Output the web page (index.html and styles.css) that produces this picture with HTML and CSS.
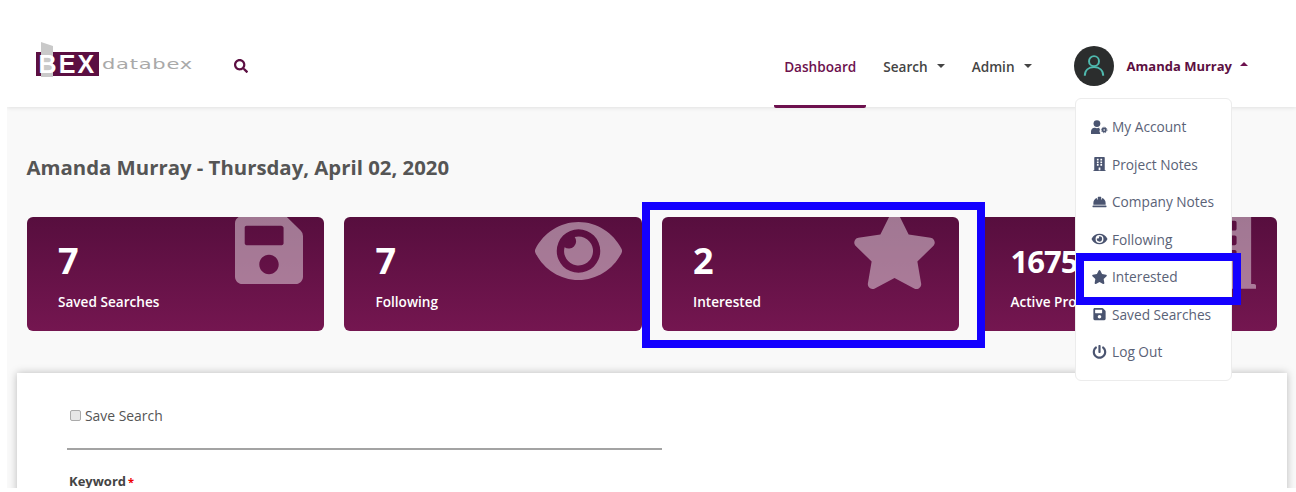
FILE: index.html
```html
<!DOCTYPE html>
<html lang="en">
<head>
    <meta charset="UTF-8">
    <title>Databex Dashboard</title>
    <link rel="stylesheet" href="styles.css">
</head>
<body>
    <div class="page">
        <header class="topbar">
            <div class="logo">
                <svg class="logo-tab" viewBox="0 0 12 35"><path d="M0 0L12 4V35H0z"/></svg>
                <div class="logo-bex"><span>BEX</span></div>
                <span class="logo-name">databex</span>
            </div>
            <svg class="top-search" viewBox="0 0 512 512"><path d="M505 442.7L405.3 343c-4.5-4.5-10.6-7-17-7H372c27.6-35.3 44-79.7 44-128C416 93.1 322.9 0 208 0S0 93.1 0 208s93.1 208 208 208c48.3 0 92.7-16.4 128-44v16.3c0 6.4 2.5 12.5 7 17l99.7 99.7c9.4 9.4 24.6 9.4 33.9 0l28.3-28.3c9.4-9.4 9.4-24.6.1-34zM208 336c-70.7 0-128-57.2-128-128 0-70.7 57.2-128 128-128 70.7 0 128 57.2 128 128 0 70.7-57.2 128-128 128z"/></svg>
            <nav class="nav">
                <a class="nav-item active">Dashboard</a>
                <a class="nav-item">Search <span class="caret"></span></a>
                <a class="nav-item">Admin <span class="caret"></span></a>
            </nav>
            <div class="user">
                <div class="avatar">
                    <svg viewBox="0 0 24 24"><circle cx="12" cy="7.5" r="4.6"/><path d="M3.5 21c0-5 3.5-8 8.500-8s8.500 3 8.500 8"/></svg>
                </div>
                <span class="user-name">Amanda Murray</span>
                <span class="caret up"></span>
            </div>
        </header>

        <main class="content">
            <h2 class="greeting">Amanda Murray - Thursday, April 02, 2020</h2>

            <div class="cards">
                <div class="card">
                    <div class="card-num">7</div>
                    <div class="card-label">Saved Searches</div>
                    <svg class="card-icon icon-save" viewBox="0 0 448 512"><path d="M433.941 129.941l-83.882-83.882A48 48 0 0 0 316.118 32H48C21.49 32 0 53.49 0 80v352c0 26.51 21.49 48 48 48h352c26.51 0 48-21.49 48-48V163.882a48 48 0 0 0-14.059-33.941zM224 416c-35.346 0-64-28.654-64-64 0-35.346 28.654-64 64-64s64 28.654 64 64c0 35.346-28.654 64-64 64zm96-304.52V212c0 6.627-5.373 12-12 12H76c-6.627 0-12-5.373-12-12V108c0-6.627 5.373-12 12-12h228.52c3.183 0 6.235 1.264 8.485 3.515l3.48 3.48A11.996 11.996 0 0 1 320 111.48z"/></svg>
                </div>
                <div class="card">
                    <div class="card-num">7</div>
                    <div class="card-label">Following</div>
                    <svg class="card-icon icon-eye" viewBox="0 0 576 512"><path d="M572.52 241.4C518.29 135.59 410.93 64 288 64S57.68 135.64 3.48 241.41a32.35 32.35 0 0 0 0 29.19C57.71 376.41 165.07 448 288 448s230.32-71.64 284.52-177.41a32.35 32.35 0 0 0 0-29.19zM288 400a144 144 0 1 1 144-144 143.93 143.93 0 0 1-144 144zm0-240a95.31 95.31 0 0 0-25.31 3.79 47.85 47.85 0 0 1-66.9 66.9A95.78 95.78 0 1 0 288 160z"/></svg>
                </div>
                <div class="card">
                    <div class="card-num">2</div>
                    <div class="card-label">Interested</div>
                    <svg class="card-icon icon-star" viewBox="0 0 576 512"><path d="M259.3 17.8L194 150.2 47.9 171.5c-26.2 3.8-36.7 36.1-17.7 54.6l105.7 103-25 145.5c-4.5 26.3 23.2 46 46.4 33.7L288 439.6l130.7 68.7c23.2 12.2 50.9-7.4 46.4-33.7l-25-145.5 105.7-103c19-18.5 8.5-50.8-17.7-54.6L382 150.2 316.7 17.8c-11.7-23.6-45.6-23.9-57.4 0z"/></svg>
                </div>
                <div class="card">
                    <div class="card-num long">1675</div>
                    <div class="card-label">Active Projects</div>
                    <svg class="card-icon icon-building" viewBox="0 0 448 512"><path d="M436 480h-20V24c0-13.255-10.745-24-24-24H56C42.745 0 32 10.745 32 24v456H12c-6.627 0-12 5.373-12 12v20h448v-20c0-6.627-5.373-12-12-12zM128 76c0-6.627 5.373-12 12-12h40c6.627 0 12 5.373 12 12v40c0 6.627-5.373 12-12 12h-40c-6.627 0-12-5.373-12-12V76zm0 96c0-6.627 5.373-12 12-12h40c6.627 0 12 5.373 12 12v40c0 6.627-5.373 12-12 12h-40c-6.627 0-12-5.373-12-12v-40zm52 148h-40c-6.627 0-12-5.373-12-12v-40c0-6.627 5.373-12 12-12h40c6.627 0 12 5.373 12 12v40c0 6.627-5.373 12-12 12zm76 160h-64v-84c0-6.627 5.373-12 12-12h40c6.627 0 12 5.373 12 12v84zm64-172c0 6.627-5.373 12-12 12h-40c-6.627 0-12-5.373-12-12v-40c0-6.627 5.373-12 12-12h40c6.627 0 12 5.373 12 12v40zm0-96c0 6.627-5.373 12-12 12h-40c-6.627 0-12-5.373-12-12v-40c0-6.627 5.373-12 12-12h40c6.627 0 12 5.373 12 12v40zm0-96c0 6.627-5.373 12-12 12h-40c-6.627 0-12-5.373-12-12V76c0-6.627 5.373-12 12-12h40c6.627 0 12 5.373 12 12v40z"/></svg>
                </div>
            </div>

            <section class="panel">
                <label class="save-search"><input type="checkbox"> Save Search</label>
                <hr class="panel-line">
                <label class="field-label">Keyword<span class="req">*</span></label>
            </section>
        </main>

        <ul class="menu">
            <li><svg viewBox="0 0 640 512"><circle cx="224" cy="128" r="128"/><path d="M0 464v-42c0-74 60-134 134-134h17c22 10 47 16 73 16s51-6 73-16h20c-4 26 4 52 24 72-22 24-30 60-12 92 4 8 10 14 16 20v80H48c-26 0-48-22-48-48z"/><circle class="gear" cx="496" cy="368" r="62"/><circle class="gear-teeth" cx="496" cy="368" r="105"/></svg>My Account</li>
            <li><svg viewBox="0 0 448 512"><path d="M436 480h-20V24c0-13.255-10.745-24-24-24H56C42.745 0 32 10.745 32 24v456H12c-6.627 0-12 5.373-12 12v20h448v-20c0-6.627-5.373-12-12-12zM128 76c0-6.627 5.373-12 12-12h40c6.627 0 12 5.373 12 12v40c0 6.627-5.373 12-12 12h-40c-6.627 0-12-5.373-12-12V76zm0 96c0-6.627 5.373-12 12-12h40c6.627 0 12 5.373 12 12v40c0 6.627-5.373 12-12 12h-40c-6.627 0-12-5.373-12-12v-40zm52 148h-40c-6.627 0-12-5.373-12-12v-40c0-6.627 5.373-12 12-12h40c6.627 0 12 5.373 12 12v40c0 6.627-5.373 12-12 12zm76 160h-64v-84c0-6.627 5.373-12 12-12h40c6.627 0 12 5.373 12 12v84zm64-172c0 6.627-5.373 12-12 12h-40c-6.627 0-12-5.373-12-12v-40c0-6.627 5.373-12 12-12h40c6.627 0 12 5.373 12 12v40zm0-96c0 6.627-5.373 12-12 12h-40c-6.627 0-12-5.373-12-12v-40c0-6.627 5.373-12 12-12h40c6.627 0 12 5.373 12 12v40zm0-96c0 6.627-5.373 12-12 12h-40c-6.627 0-12-5.373-12-12V76c0-6.627 5.373-12 12-12h40c6.627 0 12 5.373 12 12v40z"/></svg>Project Notes</li>
            <li><svg viewBox="0 0 512 512"><path d="M480 288c0-80.25-49.28-148.92-119.19-177.62L320 192V80a16 16 0 0 0-16-16h-96a16 16 0 0 0-16 16v112l-40.81-81.62C81.28 139.08 32 207.75 32 288v64h448zm16 96H16a16 16 0 0 0-16 16v32a16 16 0 0 0 16 16h480a16 16 0 0 0 16-16v-32a16 16 0 0 0-16-16z"/></svg>Company Notes</li>
            <li><svg viewBox="0 0 576 512"><path d="M572.52 241.4C518.29 135.59 410.93 64 288 64S57.68 135.64 3.48 241.41a32.35 32.35 0 0 0 0 29.19C57.71 376.41 165.07 448 288 448s230.32-71.64 284.52-177.41a32.35 32.35 0 0 0 0-29.19zM288 400a144 144 0 1 1 144-144 143.93 143.93 0 0 1-144 144zm0-240a95.31 95.31 0 0 0-25.31 3.79 47.85 47.85 0 0 1-66.9 66.9A95.78 95.78 0 1 0 288 160z"/></svg>Following</li>
            <li><svg viewBox="0 0 576 512"><path d="M259.3 17.8L194 150.2 47.9 171.5c-26.2 3.8-36.7 36.1-17.7 54.6l105.7 103-25 145.5c-4.5 26.3 23.2 46 46.4 33.7L288 439.6l130.7 68.7c23.2 12.2 50.9-7.4 46.4-33.7l-25-145.5 105.7-103c19-18.5 8.5-50.8-17.7-54.6L382 150.2 316.7 17.8c-11.7-23.6-45.6-23.9-57.4 0z"/></svg>Interested</li>
            <li><svg viewBox="0 0 448 512"><path d="M433.941 129.941l-83.882-83.882A48 48 0 0 0 316.118 32H48C21.49 32 0 53.49 0 80v352c0 26.51 21.49 48 48 48h352c26.51 0 48-21.49 48-48V163.882a48 48 0 0 0-14.059-33.941zM224 416c-35.346 0-64-28.654-64-64 0-35.346 28.654-64 64-64s64 28.654 64 64c0 35.346-28.654 64-64 64zm96-304.52V212c0 6.627-5.373 12-12 12H76c-6.627 0-12-5.373-12-12V108c0-6.627 5.373-12 12-12h228.52c3.183 0 6.235 1.264 8.485 3.515l3.48 3.48A11.996 11.996 0 0 1 320 111.48z"/></svg>Saved Searches</li>
            <li><svg viewBox="0 0 512 512"><path d="M400 54.1c63 45 104 118.6 104 201.9 0 136.8-110.8 247.7-247.5 248C120 504.3 8.2 393 8 256.4 7.9 173.1 48.9 99.3 111.8 54.2c11.7-8.3 28-4.8 35 7.7L162.6 90c5.9 10.5 3.1 23.8-6.6 31-41.5 30.8-68 79.6-68 134.9-.1 92.3 74.5 168.1 168 168.1 91.6 0 168.6-74.2 168-169.1-.3-51.8-24.7-101.8-68.1-134-9.7-7.2-12.4-20.5-6.5-30.9l15.8-28.1c7-12.4 23.2-16.1 34.8-7.8zM296 264V24c0-13.3-10.7-24-24-24h-32c-13.3 0-24 10.7-24 24v240c0 13.3 10.7 24 24 24h32c13.3 0 24-10.7 24-24z"/></svg>Log Out</li>
        </ul>

        <div class="mark mark-card"></div>
        <div class="mark mark-item"></div>
    </div>
</body>
</html>
```

FILE: styles.css
```css
* {
    box-sizing: border-box;
}

html, body {
    margin: 0;
    height: 492px;
    overflow: hidden;
    background: white;
}

body {
    font-family: 'Open Sans', 'Noto Sans', sans-serif;
    color: #555;
}

.page {
    position: relative;
    height: 488px;
    margin-left: 7px;
    background-color: #f9f9f9;
    overflow: hidden;
}

/* top bar */
.topbar {
    display: flex;
    align-items: center;
    height: 107px;
    padding: 24px 48px 0 29px;
    background: white;
    box-shadow: 0 1px 4px rgba(0,0,0,0.1);
    position: relative;
}

.logo {
    position: relative;
    display: flex;
    align-items: center;
    width: 155px;
    height: 24px;
    margin-top: -3px;
}

.logo-tab {
    position: absolute;
    z-index: 1;
    left: 5px;
    top: -10px;
    width: 12px;
    height: 35px;
    fill: #c9c9c9;
}

.logo-bex {
    width: 63px;
    height: 24px;
    background: #5c0f42;
    text-align: center;
}

.logo-bex span {
    position: relative;
    z-index: 2;
    color: white;
    font-family: 'Liberation Sans', sans-serif;
    font-weight: bold;
    font-size: 25px;
    line-height: 24px;
    letter-spacing: 2.2px;
}

.logo-name {
    margin-left: 3px;
    font-family: 'DejaVu Sans', sans-serif;
    font-size: 14px;
    letter-spacing: 0.5px;
    color: #a9a9a9;
    transform: scaleX(1.5);
    transform-origin: left center;
}

.top-search {
    width: 14px;
    height: 14px;
    margin-left: 43px;
    fill: #5c0f42;
}

.nav {
    display: flex;
    align-self: flex-start;
    height: 108px;
    margin-top: -24px;
    margin-left: auto;
}

.nav-item {
    display: flex;
    align-items: center;
    gap: 9px;
    height: 108px;
    padding: 27px 10px 0;
    margin-left: 7px;
    font-size: 13.6px;
    font-weight: 600;
    color: #444;
    border-bottom: 3px solid transparent;
}

.nav-item.active {
    color: #6d114e;
    border-bottom-color: #6d114e;
    border-radius: 2px;
}

.caret {
    display: inline-block;
    width: 0;
    height: 0;
    border-left: 4.5px solid transparent;
    border-right: 4.5px solid transparent;
    border-top: 4.5px solid #444;
}

.caret.up {
    border-top: 0;
    border-bottom: 4.5px solid #6d114e;
    margin-left: 8px;
    margin-top: -3px;
}

.user {
    display: flex;
    align-items: center;
    margin-left: 32px;
}

.avatar {
    display: flex;
    align-items: center;
    justify-content: center;
    width: 40px;
    height: 40px;
    margin-right: 13px;
    border-radius: 50%;
    background: #2b2d2d;
}

.avatar svg {
    width: 26px;
    height: 26px;
    fill: none;
    stroke: #4fb9ae;
    stroke-width: 1.8;
}

.user-name {
    font-size: 13px;
    font-weight: 700;
    color: #5c0f42;
}

/* main */
.content {
    padding: 0 19.5px;
}

.greeting {
    margin: 46px 0 36px;
    font-size: 20.35px;
    line-height: 28px;
    font-weight: 700;
    color: #555;
}

.cards {
    display: grid;
    grid-template-columns: repeat(4, 1fr);
    gap: 20px;
}

.card {
    position: relative;
    height: 114px;
    padding: 22px 31.5px;
    border-radius: 6px;
    background: linear-gradient(#570e3e, #741650);
    color: white;
    overflow: hidden;
}

.card-num {
    font-size: 36px;
    line-height: 44px;
    font-weight: 700;
}

.card-num.long {
    font-size: 31px;
    letter-spacing: -1px;
}

.card-label {
    margin-top: 10px;
    font-size: 13.6px;
    line-height: 18px;
    font-weight: 600;
}

.card-icon {
    position: absolute;
    fill: rgba(255,255,255,0.44);
}

.icon-save {
    top: -6px;
    right: 21px;
    width: 68px;
    height: 78px;
}

.icon-eye {
    top: -5px;
    right: 20px;
    width: 87px;
    height: 78px;
}

.icon-star {
    top: -5px;
    right: 21px;
    width: 87px;
    height: 77px;
}

.icon-building {
    top: -6px;
    right: 21px;
    width: 68px;
    height: 78px;
}

.panel {
    width: 1270px;
    height: 200px;
    margin: 42px 0 0 -9.5px;
    padding: 33px 50px;
    background: white;
    box-shadow: 0 0 8px rgba(0,0,0,0.25);
}

.save-search {
    display: flex;
    align-items: center;
    height: 18px;
    font-size: 13.9px;
    color: #555;
}

.save-search input {
    appearance: none;
    width: 11px;
    height: 11px;
    margin: 0 4px 0 3px;
    background: #e6e6e6;
    border: 1px solid #aaa;
    border-radius: 2px;
}

.panel-line {
    width: 595px;
    height: 2px;
    margin: 24px 0 0;
    border: 0;
    background: #a3a3a3;
}

.field-label {
    display: block;
    margin: 22px 0 0 2px;
    font-size: 13px;
    font-weight: 700;
    color: #444;
}

.req {
    margin-left: 2px;
    font-size: 11px;
    color: #e00;
}

/* user dropdown */
.menu {
    position: absolute;
    left: 1068px;
    top: 98px;
    width: 157px;
    height: 283px;
    margin: 0;
    padding: 9px 0;
    list-style: none;
    background: white;
    border: 1px solid #ececec;
    border-radius: 6px;
}

.menu li {
    display: flex;
    align-items: center;
    height: 37.5px;
    padding-left: 15px;
    font-size: 13.7px;
    color: #5a6277;
    white-space: nowrap;
}

.menu svg {
    flex: none;
    width: 17px;
    height: 14px;
    margin-right: 4px;
    fill: #4a5470;
}

.gear {
    fill: none;
    stroke: #4a5470;
    stroke-width: 64;
}

.gear-teeth {
    fill: none;
    stroke: #4a5470;
    stroke-width: 30;
    stroke-dasharray: 47 35.5;
}

/* blue highlight boxes */
.mark {
    position: absolute;
    border: 8px solid #1400ff;
}

.mark-card {
    left: 635px;
    top: 202px;
    width: 343px;
    height: 146px;
}

.mark-item {
    left: 1069px;
    top: 253px;
    width: 165px;
    height: 52px;
}
```
